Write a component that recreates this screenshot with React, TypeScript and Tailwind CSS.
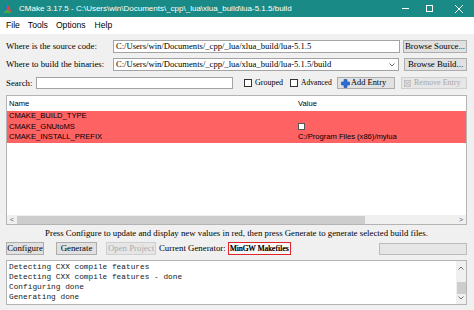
import React from 'react';

const CMakeLogo: React.FC = () => (
  <svg width="9" height="9" viewBox="0 0 10 10">
    <polygon points="5,0 0,10 4,6" fill="#1f6fd0" />
    <polygon points="5,0 10,10 4,6" fill="#e8403a" />
    <polygon points="0,10 10,10 4,6" fill="#3fae49" />
  </svg>
);

const Checkbox: React.FC = () => (
  <span className="inline-block shrink-0 w-[8px] h-[8px] bg-white border border-[#333333]" />
);

const App: React.FC = () => {
  const entries = [
    { name: 'CMAKE_BUILD_TYPE', value: '' },
    { name: 'CMAKE_GNUtoMS', value: 'check' },
    { name: 'CMAKE_INSTALL_PREFIX', value: 'C:/Program Files (x86)/mylua' },
  ];

  const log = [
    'Detecting CXX compile features',
    'Detecting CXX compile features - done',
    'Configuring done',
    'Generating done',
  ];

  return (
    <div className="w-[474px] h-[310px] overflow-hidden bg-[#f0f0f0] flex flex-col font-['Liberation_Serif',serif] text-[8.8px] text-black whitespace-nowrap">
      {/* title bar */}
      <div className="h-[17px] bg-[#1a8a86] flex items-center text-white font-['Liberation_Sans',sans-serif] text-[8px]">
        <div className="ml-[3px] flex items-center">
          <CMakeLogo />
        </div>
        <span className="ml-[7px] leading-none">
          CMake 3.17.5 - C:\Users\win\Documents\_cpp\_lua\xlua_build\lua-5.1.5/build
        </span>
        <div className="ml-auto flex items-center h-full">
          <svg width="7" height="7" viewBox="0 0 7 7" className="mr-[17px]">
            <line x1="0" y1="3.5" x2="7" y2="3.5" stroke="white" strokeWidth="1" />
          </svg>
          <svg width="7" height="7" viewBox="0 0 7 7" className="mr-[22px]">
            <rect x="0.5" y="0.5" width="6" height="6" fill="none" stroke="white" strokeWidth="1" />
          </svg>
          <svg width="8" height="8" viewBox="0 0 8 8" className="mr-[11px]">
            <line x1="0" y1="0" x2="8" y2="8" stroke="white" strokeWidth="1" />
            <line x1="8" y1="0" x2="0" y2="8" stroke="white" strokeWidth="1" />
          </svg>
        </div>
      </div>

      {/* menu bar */}
      <div className="h-[17px] bg-white flex items-center font-['Liberation_Sans',sans-serif] text-[8.6px] leading-none">
        <span className="ml-[6px]">File</span>
        <span className="ml-[8px]">Tools</span>
        <span className="ml-[8px]">Options</span>
        <span className="ml-[9px]">Help</span>
      </div>

      <div className="flex flex-col pl-[6px] pr-[7px] pt-[6px] leading-none">
        {/* source row */}
        <div className="flex items-center h-[13px]">
          <span className="w-[107px]">Where is the source code:</span>
          <div className="w-[287px] h-[13px] bg-white border border-[#a3a3a3] flex items-center pl-[2px] text-[8.6px]">
            C:/Users/win/Documents/_cpp/_lua/xlua_build/lua-5.1.5
          </div>
          <div className="ml-[3px] flex-1 h-[13px] bg-[#e1e1e1] border border-[#adadad] flex items-center justify-center">
            Browse Source...
          </div>
        </div>

        {/* build row */}
        <div className="flex items-center h-[13px] mt-[5px]">
          <span className="w-[107px]">Where to build the binaries:</span>
          <div className="w-[286px] h-[13px] bg-white border border-[#a3a3a3] flex items-center pl-[2px] text-[8.6px]">
            <span>C:/Users/win/Documents/_cpp/_lua/xlua_build/lua-5.1.5/build</span>
            <svg width="6" height="4" viewBox="0 0 6 4" className="ml-auto mr-[3px]">
              <polyline points="0.5,0.5 3,3 5.5,0.5" fill="none" stroke="#555555" strokeWidth="0.9" />
            </svg>
          </div>
          <div className="ml-[5px] flex-1 h-[13px] bg-[#e1e1e1] border border-[#adadad] flex items-center justify-center">
            Browse Build...
          </div>
        </div>

        {/* search row */}
        <div className="flex items-center h-[12px] mt-[6px]">
          <span className="w-[30px]">Search:</span>
          <div className="w-[197px] h-[12px] bg-white border border-[#a3a3a3]" />
          <div className="ml-[11px] w-[46px] flex items-center">
            <Checkbox />
            <span className="ml-[3px] text-[8px]">Grouped</span>
          </div>
          <div className="w-[46px] flex items-center">
            <Checkbox />
            <span className="ml-[3px] text-[7.6px]">Advanced</span>
          </div>
          <div className="ml-[1px] w-[58px] h-[12px] bg-[#e1e1e1] border border-[#adadad] flex items-center pl-[3px]">
            <svg width="9" height="9" viewBox="0 0 9 9" className="shrink-0">
              <path d="M3 0.5h3v2.5h2.5v3h-2.5v2.5h-3v-2.5h-2.5v-3h2.5z" fill="#2a6fd6" stroke="#1b4f9c" strokeWidth="0.6" />
            </svg>
            <span className="ml-[1px] text-[8.4px]">Add Entry</span>
          </div>
          <div className="ml-[6px] flex-1 h-[12px] bg-[#e6e6e6] border border-[#cfcfcf] flex items-center pl-[2px] text-[#a8a8a8] overflow-hidden">
            <svg width="7" height="7" viewBox="0 0 7 7" className="shrink-0">
              <rect x="0.5" y="0.5" width="6" height="6" fill="#dcdcdc" stroke="#b5b5b5" strokeWidth="0.7" />
              <line x1="1.5" y1="1.5" x2="5.5" y2="5.5" stroke="#b5b5b5" strokeWidth="0.8" />
              <line x1="5.5" y1="1.5" x2="1.5" y2="5.5" stroke="#b5b5b5" strokeWidth="0.8" />
            </svg>
            <span className="ml-[3px] text-[8px]">Remove Entry</span>
          </div>
        </div>

        {/* cache table */}
        <div className="mt-[6px] h-[130px] border border-[#b4b4b4] bg-white flex flex-col font-['Liberation_Sans',sans-serif] text-[7.6px]">
          <div className="h-[15px] flex items-center shrink-0">
            <span className="w-[291px] pl-[2px]">Name</span>
            <span>Value</span>
          </div>
          {entries.map((entry, index) => (
            <div key={index} className="h-[10.5px] bg-[#ff6262] flex items-center shrink-0">
              <span className="w-[291px] pl-[2px]">{entry.name}</span>
              {entry.value === 'check' ? (
                <span className="inline-block w-[7px] h-[7px] bg-white border border-[#555555]" />
              ) : (
                <span>{entry.value}</span>
              )}
            </div>
          ))}
          <div className="flex-1" />
          <div className="h-[9px] bg-[#f0f0f0] flex items-center shrink-0">
            <span className="w-[10px] text-center text-[7px] text-[#606060]">&lt;</span>
            <div className="w-[348px] h-[8px] bg-[#cdcdcd]" />
            <span className="ml-auto w-[10px] text-center text-[7px] text-[#606060]">&gt;</span>
          </div>
        </div>

        {/* hint */}
        <div className="h-[17px] flex items-center justify-center">
          Press Configure to update and display new values in red, then press Generate to generate selected build files.
        </div>

        {/* actions */}
        <div className="flex items-center h-[13px]">
          <div className="w-[38px] h-[13px] bg-[#e1e1e1] border border-[#adadad] flex items-center justify-center">
            Configure
          </div>
          <div className="ml-[12px] w-[41px] h-[13px] bg-[#e1e1e1] border border-[#adadad] flex items-center justify-center">
            Generate
          </div>
          <div className="ml-[9px] w-[50px] h-[13px] bg-[#e6e6e6] border border-[#cfcfcf] flex items-center justify-center text-[#ababab]">
            Open Project
          </div>
          <span className="ml-[3px]">Current Generator:</span>
          <div className="ml-[2px] w-[63px] h-[13px] border border-[#e0242b] bg-[#f7f7f7] flex items-center justify-center text-[7.8px] [text-shadow:0.3px_0_0_#000]">
            MinGW Makefiles
          </div>
          <div className="ml-auto w-[88px] h-[12px] bg-[#e6e6e6] border border-[#bcbcbc]" />
        </div>

        {/* output log */}
        <div className="mt-[5px] h-[45px] bg-white border border-[#b4b4b4] flex">
          <div className="flex-1 pl-[2px] pt-[1px] font-['Liberation_Mono',monospace] text-[7.8px] leading-[10px] text-[#222222]">
            {log.map((line, index) => (
              <div key={index}>{line}</div>
            ))}
          </div>
          <div className="w-[10px] bg-[#f0f0f0] flex flex-col items-center">
            <svg width="6" height="4" viewBox="0 0 6 4" className="mt-[5px]">
              <polyline points="0.5,3.5 3,1 5.5,3.5" fill="none" stroke="#606060" strokeWidth="0.9" />
            </svg>
            <div className="mt-[12px] w-[9px] h-[12px] bg-[#cdcdcd]" />
            <svg width="6" height="4" viewBox="0 0 6 4" className="mt-[2px]">
              <polyline points="0.5,0.5 3,3 5.5,0.5" fill="none" stroke="#606060" strokeWidth="0.9" />
            </svg>
          </div>
        </div>
      </div>
    </div>
  );
};

export default App;
